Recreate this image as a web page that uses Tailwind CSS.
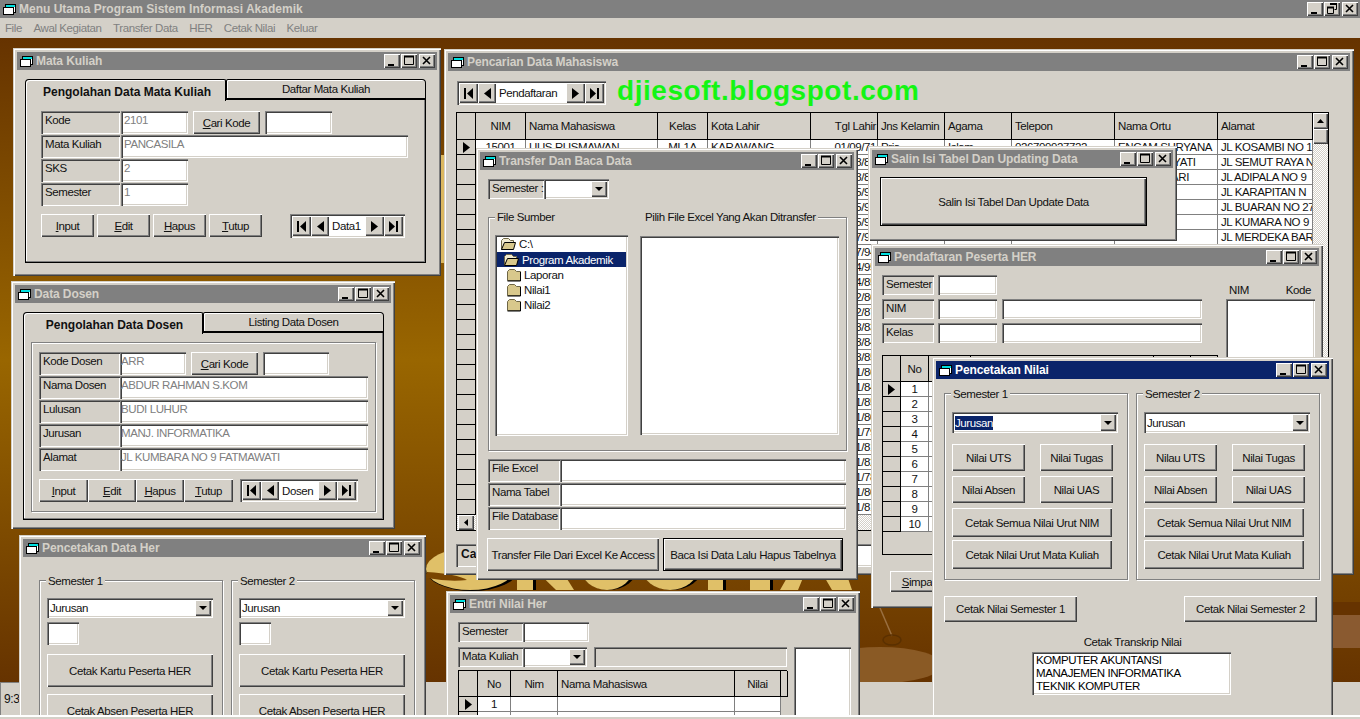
<!DOCTYPE html>
<html lang="en">
<head>
<meta charset="UTF-8">
<title>Menu Utama Program Sistem Informasi Akademik</title>
<script src="https://cdn.jsdelivr.net/npm/@tailwindcss/browser@4"></script>
</head>
<body class="w-[1360px] h-[719px] overflow-hidden bg-[#d4d0c8] font-['Liberation_Sans',sans-serif] text-[11.5px] tracking-[-0.4px] leading-[14px] text-[#111]">

<!-- Main title bar -->
<div class="h-[18px] bg-[#808080] flex items-center pl-[2px] pr-[2px]">
    <span id="mainIcon" class="w-[16px] h-[16px]"></span>
    <span class="ml-[1px] font-bold text-[12px] tracking-[0px] text-[#d4d0c8]">Menu Utama Program Sistem Informasi Akademik</span>
    <div id="mainCaps" class="ml-auto flex gap-[1px]"></div>
</div>

<!-- Menu bar -->
<div class="h-[20px] flex items-center pl-[5px] gap-[11.5px] text-[#808080]">
    <span>File</span><span>Awal Kegiatan</span><span>Transfer Data</span><span>HER</span><span>Cetak Nilai</span><span>Keluar</span>
</div>

<!-- MDI client -->
<div id="client" class="relative h-[677px] overflow-hidden">
    <div class="absolute inset-x-0 top-0 h-[644px] bg-[linear-gradient(#663300_0%,#996600_50%,#663300_100%)]">
        <svg class="w-full h-full" viewBox="0 38 1360 644">
            <rect x="441" y="155" width="5" height="108" fill="#dcb860"/>
            <ellipse cx="472" cy="570" rx="46" ry="21" fill="#000"/>
            <ellipse cx="470" cy="569" rx="44" ry="21" fill="#e0c068"/>
            <path d="M427 572 q30 2 40 8 q-18 2 -40 -2z" fill="#7a4500"/>
            <rect x="517" y="555" width="19" height="35" fill="#000"/>
            <rect x="517" y="555" width="16" height="35" fill="#e0c068"/>
            <polygon points="520,555 552,555 574,590 556,590" fill="#e0c068"/>
            <ellipse cx="609" cy="568" rx="28" ry="22" fill="#000"/>
            <ellipse cx="607" cy="568" rx="26" ry="22" fill="#e0c068"/>
            <ellipse cx="672" cy="568" rx="30" ry="22" fill="#000"/>
            <ellipse cx="670" cy="568" rx="28" ry="22" fill="#e0c068"/>
            <rect x="708" y="555" width="18" height="35" fill="#000"/>
            <rect x="708" y="555" width="15" height="35" fill="#e0c068"/>
            <rect x="726" y="555" width="30" height="18" fill="#e0c068"/>
            <rect x="750" y="555" width="23" height="35" fill="#000"/>
            <rect x="750" y="555" width="20" height="35" fill="#e0c068"/>
            <polygon points="800,555 840,555 852,590 832,590 822,573 805,573 798,590 780,590" fill="#e0c068"/>
            <line x1="880" y1="608" x2="892" y2="636" stroke="#9a7040" stroke-width="1.5"/>
            <ellipse cx="892" cy="640" rx="9" ry="5" fill="none" stroke="#5a3000" stroke-width="1.5"/>
            <ellipse cx="880" cy="665" rx="62" ry="18" fill="#8a5a25"/>
            <rect x="1333" y="602" width="27" height="13" fill="#663300"/>
            <rect x="1333" y="615" width="27" height="33" fill="#8a5a30"/>
        </svg>
    </div>
    <div class="absolute left-0 bottom-0 w-[60px] h-[33px] pl-[4px] pt-[10px] text-[12px] shadow-[inset_1px_1px_0_#808080]">9:3</div>
</div>

<!-- Bottom edge -->
<div class="h-[4px] border-t-2 border-white"></div>

<script>
    // Bevels used by the VB6 style controls
    const BTN = 'bg-[#d4d0c8] shadow-[inset_1px_1px_0_#fff,inset_-1px_-1px_0_#404040,inset_-2px_-2px_0_#808080] flex items-center justify-center shrink-0';
    const DEFBTN = 'bg-[#d4d0c8] border border-black shadow-[inset_1px_1px_0_#fff,inset_-1px_-1px_0_#404040,inset_-2px_-2px_0_#808080] flex items-center justify-center shrink-0';
    const SUNK = 'shadow-[inset_1px_1px_0_#808080,inset_2px_2px_0_#404040,inset_-1px_-1px_0_#fff,inset_-2px_-2px_0_#d4d0c8] shrink-0';
    const WIN = 'absolute bg-[#d4d0c8] p-[4px] overflow-hidden shadow-[inset_1px_1px_0_#d4d0c8,inset_2px_2px_0_#fff,inset_-1px_-1px_0_#404040,inset_-2px_-2px_0_#808080]';
    const ETCH = 'relative border border-[#808080] shadow-[1px_1px_0_#fff,inset_1px_1px_0_#fff] shrink-0';
    const LEGEND = 'absolute bg-[#d4d0c8] px-[2px] whitespace-nowrap';
    const DITHER = 'bg-[repeating-conic-gradient(#d4d0c8_0_25%,#fff_0_50%)] bg-[length:2px_2px]';

    const formIcon = `<svg class="w-[16px] h-[16px] shrink-0" viewBox="0 0 16 16"><rect x="3.5" y="3.5" width="10" height="8" fill="#fff" stroke="#000"/><rect x="4" y="4" width="9" height="2" fill="#00e0e0"/><rect x="1.5" y="6.5" width="10" height="7" fill="#fff" stroke="#000"/></svg>`;
    const minGlyph = `<svg class="w-[16px] h-[14px]" viewBox="0 0 16 14"><rect x="4" y="10" width="6" height="2" fill="#000"/></svg>`;
    const maxGlyph = `<svg class="w-[16px] h-[14px]" viewBox="0 0 16 14" fill="none" stroke="#000"><path d="M3.5 2.5h9v8h-9z"/><path d="M3 2.5h10" stroke-width="2"/></svg>`;
    const restGlyph = `<svg class="w-[16px] h-[14px]" viewBox="0 0 16 14" fill="none" stroke="#000"><path d="M6.5 2.5h6v5h-2"/><path d="M6 2h7" stroke-width="2"/><path d="M3.5 5.5h6v6h-6z"/><path d="M3 5.5h7" stroke-width="2"/></svg>`;
    const closeGlyph = `<svg class="w-[16px] h-[14px]" viewBox="0 0 16 14" stroke="#000" stroke-width="1.6"><path d="M4 3l7 7M11 3l-7 7"/></svg>`;
    const triRight = `<svg class="w-[7px] h-[11px]" viewBox="0 0 7 11"><polygon points="0,0 7,5.5 0,11"/></svg>`;
    const triDown = `<svg class="w-[8px] h-[4px]" viewBox="0 0 8 4"><polygon points="0,0 8,0 4,4"/></svg>`;
    const navGlyphs = [
        `<svg class="w-[9px] h-[11px]" viewBox="0 0 9 11"><rect width="2" height="11"/><polygon points="9,0 3,5.5 9,11"/></svg>`,
        `<svg class="w-[7px] h-[11px]" viewBox="0 0 7 11"><polygon points="7,0 0,5.5 7,11"/></svg>`,
        triRight,
        `<svg class="w-[9px] h-[11px]" viewBox="0 0 9 11"><rect x="7" width="2" height="11"/><polygon points="0,0 6,5.5 0,11"/></svg>`
    ];
    const folderClosed = `<svg class="w-[16px] h-[14px] shrink-0" viewBox="0 0 16 14"><path d="M1.5 3.5l2-2h5l2 2h4v9h-13z" fill="#d8c88c" stroke="#6e6646"/><path d="M14.5 4v9h-13" fill="none" stroke="#000"/></svg>`;
    const folderOpen = `<svg class="w-[17px] h-[14px] shrink-0" viewBox="0 0 17 14"><path d="M1.5 3.5l2-2h5l2 2h3v2h-8l-4 7z" fill="#f0ead0" stroke="#6e6646"/><path d="M1.5 12.5l3-7h11l-2 7z" fill="#d8c88c" stroke="#000"/></svg>`;

    const caps = (glyph = maxGlyph) => `<div class="ml-auto flex gap-[1px]">
        <div class="${BTN} w-[16px] h-[14px]">${minGlyph}</div>
        <div class="${BTN} w-[16px] h-[14px]">${glyph}</div>
        <div class="${BTN} w-[16px] h-[14px] ml-[1px]">${closeGlyph}</div></div>`;

    const win = (pos, title, body, active = false) => `<div class="${WIN} ${pos}">
        <div class="h-[18px] flex items-center pr-[2px] pl-[2px] font-bold text-[12px] tracking-[-0.1px] ${active ? 'bg-[#0a246a] text-white' : 'bg-[#808080] text-[#d4d0c8]'}">
            ${formIcon}<span class="ml-[1px] whitespace-nowrap">${title}</span>${caps()}
        </div>${body}</div>`;

    const btn = (text, cls) => `<div class="${BTN} ${cls}">${text}</div>`;
    const lbl = (text, cls) => `<div class="${SUNK} bg-[#d4d0c8] pl-[4px] pt-[2px] whitespace-nowrap ${cls}">${text}</div>`;
    const fld = (text, cls) => `<div class="${SUNK} bg-white text-[#808080] pl-[3px] pt-[2px] whitespace-nowrap overflow-hidden ${cls}">${text}</div>`;
    const combo = (text, cls, selected = false) => `<div class="${SUNK} bg-white flex items-center p-[2px] ${cls}">
        <span class="ml-[1px] ${selected ? 'bg-[#0a246a] text-white' : ''}">${text}</span>
        <div class="${BTN} ml-auto w-[16px] h-full">${triDown}</div></div>`;
    const dataCtl = (text, cls, mid) => `<div class="${SUNK} bg-white flex items-center p-[2px] ${cls}">
        <div class="${BTN} w-[19px] h-full">${navGlyphs[0]}</div><div class="${BTN} w-[18px] h-full">${navGlyphs[1]}</div>
        <div class="${mid} pl-[3px] whitespace-nowrap">${text}</div>
        <div class="${BTN} w-[19px] h-full">${navGlyphs[2]}</div><div class="${BTN} w-[19px] h-full">${navGlyphs[3]}</div></div>`;
    const list = (cls, inner = '') => `<div class="${SUNK} bg-white ${cls}">${inner}</div>`;
    const tabs = (first, second, w1, w2, panel) => `<div class="flex h-[21px] relative z-10">
            <div class="${w1} h-[22px] rounded-tl-[4px] rounded-tr-[2px] border-x border-t border-black bg-[#d4d0c8] shadow-[inset_1px_1px_0_#fff] font-bold text-[12px] tracking-[0px] flex items-center justify-center pt-[2px] pl-[3px]">${first}</div>
            <div class="${w2} h-[21px] rounded-tr-[4px] rounded-tl-[2px] border-x border-y border-b-2 border-black shadow-[inset_1px_1px_0_#fff] flex items-center justify-center">${second}</div>
        </div>${panel}`;
    const PANEL = 'border-x border-b border-x-black border-b-black shadow-[inset_-1px_-1px_0_#808080,inset_1px_0_0_#fff]';

    // Grid helpers, header cells have black lines and data cells gray ones
    const hcell = (text, cls = 'justify-start pl-[3px]') => `<div class="flex items-center whitespace-nowrap overflow-hidden border-r border-b border-black ${cls}">${text}</div>`;
    const dcell = (text, cls = 'pl-[3px] text-left') => `<div class="bg-white border-r border-b border-[#808080] whitespace-nowrap overflow-hidden leading-[14px] ${cls}">${text}</div>`;
    const ind = (on) => `<div class="bg-[#d4d0c8] border-r border-b border-black flex items-center justify-center">${on ? triRight : ''}</div>`;

    // Pencarian Data Mahasiswa grid
    const MAINCOLS = 'grid grid-cols-[19px_50px_132px_50px_103px_67px_67px_67px_103px_103px_95px]';
    const dates = ['01/09/71','12/08/80','16/08/81','05/05/90','15/05/91','25/05/92','07/07/93','17/07/94','14/04/95','14/04/85','02/02/86','12/02/87','03/03/83','13/03/84','23/03/85','01/01/86','11/01/84','21/01/85','01/11/80','11/01/79','21/01/81','01/11/82','11/01/78','21/01/80','01/11/81'];
    const ortu = ['ENCAM SURYANA','DEWI MARYATI','SITI MUNTARI'];
    const alamat = ['JL KOSAMBI NO 1','JL SEMUT RAYA N','JL ADIPALA NO 9','JL KARAPITAN N','JL BUARAN NO 27','JL KUMARA NO 9','JL MERDEKA BAR'];
    const mainRows = dates.map((d, i) => `<div class="${MAINCOLS} h-[15px]">${ind(i === 0)}
        ${dcell(i === 0 ? '15001' : '', 'text-center')}${dcell(i === 0 ? 'UUS RUSMAWAN' : '')}${dcell(i === 0 ? 'MI-1A' : '', 'text-center')}${dcell(i === 0 ? 'KARAWANG' : '')}
        ${dcell(d, 'text-right pr-[1px]')}${dcell(i === 0 ? 'Pria' : '')}${dcell(i === 0 ? 'Islam' : '')}${dcell(i === 0 ? '026709927722' : '')}${dcell(ortu[i] || '')}${dcell(alamat[i] || '')}</div>`).join('');

    const pencarian = win('left-[444px] top-[11px] w-[910px] h-[526px]', 'Pencarian Data Mahasiswa', `
        <div class="flex items-center mt-[10px] ml-[9px] h-[24px]">
            ${dataCtl('Pendaftaran', 'w-[149px] h-[24px]', 'w-[71px]')}
            <span class="ml-[11px] mb-[4px] font-bold text-[#14f514] text-[28px] leading-[30px] tracking-[0.55px]">djiesoft.blogspot.com</span>
        </div>
        <div class="flex mt-[7px] ml-[8px] w-[873px] h-[419px] border border-black overflow-hidden">
            <div class="w-[856px] flex flex-col shrink-0">
                <div class="${MAINCOLS} h-[27px] bg-[#d4d0c8] shrink-0">
                    ${hcell('')}${hcell('NIM', 'justify-center')}${hcell('Nama Mahasiswa')}${hcell('Kelas', 'justify-center')}${hcell('Kota Lahir')}${hcell('Tgl Lahir', 'justify-end pr-[1px]')}${hcell('Jns Kelamin')}${hcell('Agama')}${hcell('Telepon')}${hcell('Nama Ortu')}${hcell('Alamat')}
                </div>
                <div class="flex-1 overflow-hidden">${mainRows}</div>
                <div class="h-[15px] flex shrink-0 ${DITHER}"><div class="${BTN} w-[16px] h-[15px] ml-[1px]"><svg class="w-[4px] h-[7px]" viewBox="0 0 4 7"><polygon points="4,0 0,3.5 4,7"/></svg></div></div>
            </div>
            <div class="w-[16px] flex flex-col ${DITHER}">
                ${btn('<svg class="w-[7px] h-[4px]" viewBox="0 0 7 4"><polygon points="3.5,0 7,4 0,4"/></svg>', 'h-[16px]')}
                ${btn('', 'h-[15px]')}
            </div>
        </div>
        <div class="flex mt-[13px] ml-[8px]">
            <div class="${SUNK} bg-[#d4d0c8] w-[300px] h-[23px] pl-[5px] pt-[3px] font-bold text-[12px] tracking-[0.15px]">Ca</div>
            <div class="${SUNK} bg-white w-[500px] h-[23px]"></div>
        </div>`);

    const mataKuliah = win('left-[13px] top-[10px] w-[428px] h-[228px]', 'Mata Kuliah', `
        <div class="ml-[8px] mt-[9px] w-[401px]">${tabs('Pengolahan Data Mata Kuliah', 'Daftar Mata Kuliah', 'w-[201px]', 'w-[200px]', `
            <div class="${PANEL} h-[163px] pl-[15px] pt-[11px] flex flex-col gap-[1px]">
                <div class="flex h-[23px]">${lbl('Kode', 'w-[79px] mr-[1px]')}${fld('2101', 'w-[67px]')}${btn('<span><u>C</u>ari Kode</span>', 'w-[67px] ml-[5px]')}${fld('', 'w-[67px] ml-[5px]')}</div>
                <div class="flex h-[23px]">${lbl('Mata Kuliah', 'w-[79px] mr-[1px]')}${fld('PANCASILA', 'w-[287px]')}</div>
                <div class="flex h-[23px]">${lbl('SKS', 'w-[79px] mr-[1px]')}${fld('2', 'w-[67px]')}</div>
                <div class="flex h-[23px]">${lbl('Semester', 'w-[79px] mr-[1px]')}${fld('1', 'w-[67px]')}</div>
                <div class="flex h-[23px] mt-[7px] gap-[3px]">
                    ${btn('<span><u>I</u>nput</span>', 'w-[53px]')}${btn('<span><u>E</u>dit</span>', 'w-[53px]')}${btn('<span><u>H</u>apus</span>', 'w-[53px]')}${btn('<span><u>T</u>utup</span>', 'w-[53px]')}
                    ${dataCtl('Data1', 'w-[115px] h-[24px] ml-[25px]', 'w-[36px]')}
                </div>
            </div>`)}</div>`);

    const dosen = win('left-[11px] top-[243px] w-[384px] h-[248px]', 'Data Dosen', `
        <div class="ml-[8px] mt-[9px] w-[361px]">${tabs('Pengolahan Data Dosen', 'Listing Data Dosen', 'w-[180px]', 'w-[181px]', `
            <div class="${PANEL} h-[187px] pl-[7px] pt-[9px]">
                <div class="${ETCH} w-[345px] h-[170px] pl-[7px] pt-[9px] flex flex-col gap-[1px]">
                    <div class="flex h-[23px]">${lbl('Kode Dosen', 'w-[81px]')}${fld('ARR', 'w-[66px] pl-[1px]!')}${btn('<span><u>C</u>ari Kode</span>', 'w-[67px] ml-[5px]')}${fld('', 'w-[66px] ml-[5px]')}</div>
                    <div class="flex h-[23px]">${lbl('Nama Dosen', 'w-[81px]')}${fld('ABDUR RAHMAN S.KOM', 'w-[248px] pl-[1px]!')}</div>
                    <div class="flex h-[23px]">${lbl('Lulusan', 'w-[81px]')}${fld('BUDI LUHUR', 'w-[248px] pl-[1px]!')}</div>
                    <div class="flex h-[23px]">${lbl('Jurusan', 'w-[81px]')}${fld('MANJ. INFORMATIKA', 'w-[248px] pl-[1px]!')}</div>
                    <div class="flex h-[23px]">${lbl('Alamat', 'w-[81px]')}${fld('JL KUMBARA NO 9 FATMAWATI', 'w-[248px] pl-[1px]!')}</div>
                    <div class="flex h-[23px] mt-[7px]">
                        ${btn('<span><u>I</u>nput</span>', 'w-[49px]')}${btn('<span><u>E</u>dit</span>', 'w-[48px]')}${btn('<span><u>H</u>apus</span>', 'w-[48px]')}${btn('<span><u>T</u>utup</span>', 'w-[49px]')}
                        ${dataCtl('Dosen', 'w-[118px] h-[23px] ml-[7px]', 'w-[39px]')}
                    </div>
                </div>
            </div>`)}</div>`);

    const herCol = (title) => `<div class="${ETCH} w-[184px] h-[300px] pl-[7px] pt-[17px]">
            <div class="${LEGEND} -top-[7px] left-[6px]">${title}</div>
            ${combo('Jurusan', 'w-[166px] h-[20px]')}
            ${fld('', 'w-[32px] h-[23px] mt-[4px]')}
            ${btn('Cetak Kartu Peserta HER', 'w-[166px] h-[33px] mt-[9px]')}
            ${btn('Cetak Absen Peserta HER', 'w-[166px] h-[33px] mt-[7px]')}
        </div>`;
    const cetakHer = win('left-[19px] top-[497px] w-[407px] h-[300px]', 'Pencetakan Data Her', `
        <div class="flex gap-[8px] ml-[16px] mt-[23px]">${herCol('Semester 1')}${herCol('Semester 2')}</div>`);

    const salin = win('left-[868px] top-[108px] w-[309px] h-[95px]', 'Salin Isi Tabel Dan Updating Data', `
        <div class="${DEFBTN} w-[267px] h-[49px] ml-[8px] mt-[9px]">Salin Isi Tabel Dan Update Data</div>`);

    const dirRow = (icon, text, cls, sel = false) => `<div class="flex items-center h-[15px] ${cls}">${icon}<span class="ml-[2px] flex-1 ${sel ? 'text-white' : ''}">${text}</span></div>`;
    const transfer = win('left-[476px] top-[110px] w-[382px] h-[432px]', 'Transfer Dan Baca Data', `
        <div class="flex h-[20px] ml-[8px] mt-[9px]">${lbl('Semester :', 'w-[56px]')}${combo('', 'w-[65px] h-[20px]')}</div>
        <div class="${ETCH} w-[359px] h-[234px] ml-[8px] mt-[18px] flex pl-[6px] pt-[17px]">
            <div class="${LEGEND} -top-[8px] left-[6px] w-[148px]">File Sumber</div>
            <div class="${LEGEND} -top-[8px] left-[154px]">Pilih File Excel Yang Akan Ditransfer</div>
            ${list('w-[133px] h-[201px] px-[2px] pt-[1px] overflow-hidden', `
                ${dirRow(folderOpen, 'C:\\', 'pl-[3px]')}
                ${dirRow(folderOpen, 'Program Akademik', 'pl-[6px] bg-[#0a246a] mt-[1px]', true)}
                ${dirRow(folderClosed, 'Laporan', 'pl-[9px]')}
                ${dirRow(folderClosed, 'Nilai1', 'pl-[9px]')}
                ${dirRow(folderClosed, 'Nilai2', 'pl-[9px]')}`)}
            ${list('w-[199px] h-[199px] ml-[12px] mt-[1px]')}
        </div>
        <div class="ml-[8px] mt-[8px] flex flex-col gap-[1px]">
            <div class="flex h-[23px]">${lbl('File Excel', 'w-[72px]')}${fld('', 'w-[286px]')}</div>
            <div class="flex h-[23px]">${lbl('Nama Tabel', 'w-[72px]')}${fld('', 'w-[286px]')}</div>
            <div class="flex h-[23px]">${lbl('File Database', 'w-[72px]')}${fld('', 'w-[286px]')}</div>
        </div>
        <div class="flex ml-[7px] mt-[8px] gap-[4px]">
            ${btn('Transfer File Dari Excel Ke Access', 'w-[172px] h-[33px]')}
            <div class="${DEFBTN} w-[180px] h-[33px]">Baca Isi Data Lalu Hapus Tabelnya</div>
        </div>`);

    // Pendaftaran Peserta HER
    const HERCOLS = 'grid grid-cols-[18px_28px_42px_183px_37px_27px]';
    const herRows = [1,2,3,4,5,6,7,8,9,10].map(n => `<div class="${HERCOLS} h-[15px]">${ind(n === 1)}${dcell(n, 'text-center')}${dcell('')}${dcell('')}${dcell('')}${dcell('')}</div>`).join('');
    const daftar = win('left-[871px] top-[206px] w-[452px] h-[364px]', 'Pendaftaran Peserta HER', `
        <div class="flex">
            <div class="w-[344px] ml-[7px] shrink-0">
                <div class="mt-[9px] flex flex-col gap-[4px]">
                    <div class="flex h-[20px]">${lbl('Semester', 'w-[52px]')}${fld('', 'w-[59px] ml-[4px]')}</div>
                    <div class="flex h-[20px]">${lbl('NIM', 'w-[52px]')}${fld('', 'w-[59px] ml-[4px]')}${fld('', 'w-[200px] ml-[5px]')}</div>
                    <div class="flex h-[20px]">${lbl('Kelas', 'w-[52px]')}${fld('', 'w-[59px] ml-[4px]')}${fld('', 'w-[200px] ml-[5px]')}</div>
                </div>
                <div class="w-[336px] h-[200px] mt-[12px] border-t border-l border-b border-black">
                    <div class="${HERCOLS} h-[26px]">${hcell('')}${hcell('No', 'justify-center')}${hcell('')}${hcell('')}${hcell('')}${hcell('')}</div>
                    ${herRows}
                </div>
                ${btn('<span><u>S</u>impan</span>', 'w-[60px] h-[21px] ml-[8px] mt-[16px]')}
            </div>
            <div class="mt-[17px]">
                <div class="flex w-[89px] pl-[3px] pr-[4px] justify-between h-[14px]"><span>NIM</span><span>Kode</span></div>
                ${list('w-[89px] h-[100px] mt-[2px]')}
            </div>
        </div>`);

    // Entri Nilai Her
    const ENTRICOLS = 'grid grid-cols-[19px_33px_47px_177px_46px_7px]';
    const entri = win('left-[446px] top-[553px] w-[414px] h-[170px]', 'Entri Nilai Her', `
        <div class="flex h-[20px] ml-[8px] mt-[9px]">${lbl('Semester', 'w-[65px]')}${fld('', 'w-[66px]')}</div>
        <div class="flex ml-[8px] mt-[5px]">
            <div class="w-[329px] shrink-0">
                <div class="flex h-[20px]">${lbl('Mata Kuliah', 'w-[65px]')}${combo('', 'w-[64px] h-[20px]')}<div class="${SUNK} bg-[#d4d0c8] w-[193px] ml-[7px]"></div></div>
                <div class="mt-[3px] border-t border-l border-black">
                    <div class="${ENTRICOLS} h-[26px]">${hcell('')}${hcell('No', 'justify-center')}${hcell('Nim', 'justify-center')}${hcell('Nama Mahasiswa')}${hcell('Nilai', 'justify-center')}${hcell('')}</div>
                    <div class="${ENTRICOLS} h-[15px]">${ind(true)}${dcell('1', 'text-center')}${dcell('')}${dcell('')}${dcell('')}<div class="bg-[#d4d0c8]"></div></div>
                    <div class="${ENTRICOLS} h-[15px]">${ind(false)}${dcell('')}${dcell('')}${dcell('')}${dcell('')}<div class="bg-[#d4d0c8]"></div></div>
                </div>
            </div>
            ${list('w-[57px] h-[90px] ml-[7px]')}
        </div>`);

    // Pencetakan Nilai (the active window)
    const nilaiCol = (title, uts, selected) => `<div class="${ETCH} w-[184px] h-[187px] pl-[7px] pt-[18px]">
            <div class="${LEGEND} -top-[7px] left-[6px]">${title}</div>
            ${combo('Jurusan', 'w-[166px] h-[21px]', selected)}
            <div class="grid grid-cols-[73px_73px] gap-x-[15px] gap-y-[5px] mt-[11px]">
                ${btn(uts, 'h-[27px]')}${btn('Nilai Tugas', 'h-[27px]')}${btn('Nilai Absen', 'h-[27px]')}${btn('Nilai UAS', 'h-[27px]')}
            </div>
            ${btn('Cetak Semua Nilai Urut NIM', 'w-[160px] h-[29px] mt-[5px]')}
            ${btn('Cetak Nilai Urut Mata Kuliah', 'w-[160px] h-[29px] mt-[3px]')}
        </div>`;
    const nilai = win('left-[932px] top-[319px] w-[401px] h-[380px]', 'Pencetakan Nilai', `
        <div class="flex gap-[8px] ml-[8px] mt-[14px]">${nilaiCol('Semester 1', 'Nilai UTS', true)}${nilaiCol('Semester 2', 'Nilau UTS', false)}</div>
        <div class="flex justify-between w-[373px] ml-[8px] mt-[16px]">
            ${btn('Cetak Nilai Semester 1', 'w-[133px] h-[26px]')}${btn('Cetak Nilai Semester 2', 'w-[133px] h-[26px]')}
        </div>
        <div class="text-center mt-[13px] w-[393px] h-[14px]">Cetak Transkrip Nilai</div>
        ${list('w-[199px] h-[43px] ml-[96px] mt-[3px] pl-[4px] pt-[2px] leading-[13px] text-black', 'KOMPUTER AKUNTANSI<br>MANAJEMEN INFORMATIKA<br>TEKNIK KOMPUTER')}`, true);

    document.getElementById('mainIcon').innerHTML = formIcon;
    document.getElementById('mainCaps').innerHTML = caps(restGlyph);
    document.getElementById('client').insertAdjacentHTML('beforeend', pencarian + mataKuliah + dosen + cetakHer + salin + transfer + daftar + entri + nilai);
</script>
</body>
</html>
